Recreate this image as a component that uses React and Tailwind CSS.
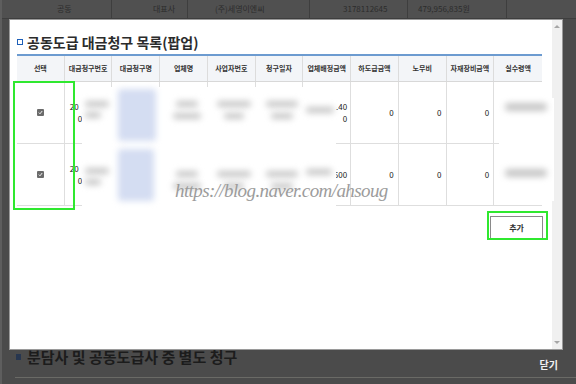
import React from "react";

const HEADERS = [
  "선택",
  "대금청구번호",
  "대금청구명",
  "업체명",
  "사업자번호",
  "청구일자",
  "업체배정금액",
  "하도급금액",
  "노무비",
  "자재장비금액",
  "실수령액",
];

const ROWS = [
  { no: ["20", "0"], amount: ["5.40", "0"] },
  { no: ["20", "0"], amount: ["600"] },
];

function CheckBox() {
  return (
    <span className="flex h-[7px] w-[7px] items-center justify-center rounded-[1px] bg-[#6b6b6b]">
      <svg width="5" height="5" viewBox="0 0 5 5">
        <path d="M0.8 2.6 L2 3.8 L4.2 1" fill="none" stroke="#fff" strokeWidth="0.9" />
      </svg>
    </span>
  );
}

function Blob({ w, h = 6, color = "#c6c6c6" }) {
  return <div className="rounded-full blur-[3px]" style={{ width: w, height: h, background: color }} />;
}

function BlurColumn({ lines, top = 14, gap = 6 }) {
  return (
    <div className="flex w-[47.7px] flex-col items-center gap-[52px]">
      {[0, 1].map((r) => (
        <div key={r} className="flex flex-col items-center" style={{ marginTop: r === 0 ? top : 0, gap }}>
          {lines.map((w, i) => (
            <Blob key={i} w={w} />
          ))}
        </div>
      ))}
    </div>
  );
}

export default function App() {
  return (
    <div className="relative h-[384px] w-[576px] overflow-hidden bg-[#4b4b4b] font-['Noto_Sans_CJK_KR','Noto_Sans',sans-serif] antialiased">
      {/* dimmed page behind */}
      <div className="flex h-full flex-col border-l-[2px] border-[#5e5e5e]">
        <div className="flex h-[19px] border-b border-[#3e3e3e] bg-[#505050] text-[8px] leading-[18px] text-[#2c2c2c]">
          <div className="w-[110px] border-r border-[#3e3e3e] pl-[55px]">공동</div>
          <div className="w-[76px] border-r border-[#3e3e3e] pl-[41px]">대표사</div>
          <div className="w-[122px] border-r border-[#3e3e3e] pl-[27px]">(주)세영이엔씨</div>
          <div className="w-[98px] border-r border-[#3e3e3e] pl-[33px]">3178112645</div>
          <div className="w-[99px] border-r border-[#3e3e3e] pl-[10px]">479,956,835원</div>
          <div className="flex-1" />
        </div>
        <div className="mt-[329px] flex items-center gap-[6px] pl-[14px]">
          <span className="h-[6px] w-[5px] bg-[#27364f]" />
          <span className="text-[15px] font-bold leading-[18px] text-[#1c1c1c]">분담사 및 공동도급사 중 별도 청구</span>
        </div>
        <div className="mt-[11px] ml-[13px] h-px bg-[#6a6a66]" />
      </div>

      {/* dialog */}
      <div className="absolute left-[9px] top-[19px] flex w-[554px] flex-col">
        <div className="relative flex h-[331px] border border-[#9a9a9a] bg-white">
          <div className="flex-1 pl-[7px] pt-[13px]">
            <div className="flex h-[18px] items-center gap-[4px]">
              <span className="h-[6px] w-[6px] border-[1.5px] border-[#1d5fb8]" />
              <span className="text-[14px] font-bold leading-[18px] text-[#2b2b2b]">공동도급 대금청구 목록(팝업)</span>
            </div>
            <div className="mt-[3px] w-[525px] border-t-[2px] border-[#6c9bd0]">
              <div className="grid h-[26px] grid-cols-11 border-b border-[#d8d8d8] bg-[#f3f5f8]">
                {HEADERS.map((h, i) => (
                  <div
                    key={h}
                    className={`flex items-center justify-center text-[7px] font-bold text-[#333] ${i < 10 ? "border-r border-[#dcdcdc]" : ""}`}
                  >
                    {h}
                  </div>
                ))}
              </div>
              {ROWS.map((r, ri) => (
                <div key={ri} className="grid h-[62px] grid-cols-11 border-b border-[#dedede] text-[8px] text-[#222]">
                  <div className="flex items-center justify-center border-r border-[#dedede]">
                    <CheckBox />
                  </div>
                  <div className="flex flex-col justify-center border-r border-[#dedede] pl-[5px] leading-[12px]">
                    <span>{r.no[0]}</span>
                    <span className="pl-[8px]">{r.no[1]}</span>
                  </div>
                  <div className="border-r border-[#dedede]" />
                  <div className="border-r border-[#dedede]" />
                  <div className="border-r border-[#dedede]" />
                  <div className="border-r border-[#dedede]" />
                  <div className="flex flex-col items-end justify-center border-r border-[#dedede] pr-[3px] leading-[12px]">
                    {r.amount.map((a, i) => (
                      <span key={i}>{a}</span>
                    ))}
                  </div>
                  {[0, 1, 2].map((k) => (
                    <div key={k} className="flex items-center justify-end border-r border-[#dedede] pr-[4px]">
                      0
                    </div>
                  ))}
                  <div />
                </div>
              ))}
            </div>
            <div className="flex w-[526px] justify-end pt-[10px]">
              <button className="h-[23px] w-[53px] border border-[#8a8a8a] bg-white text-[8px] font-bold text-[#333]">
                추가
              </button>
            </div>
          </div>
          {/* scrollbar */}
          <div className="flex w-[10px] flex-col items-center justify-between bg-[#f0f0f0] py-[5px]">
            <span className="h-0 w-0 border-x-[3px] border-b-[3px] border-x-transparent border-b-[#a6a6a6]" />
            <span className="h-0 w-0 border-x-[3px] border-t-[3px] border-x-transparent border-t-[#a6a6a6]" />
          </div>

          {/* redacted cells */}
          <div className="absolute left-[72px] top-[67px] flex h-[119px] w-[254px] bg-white pl-[3px]">
            <div className="flex w-[30px] flex-col gap-[50px] pt-[14px]">
              <div className="flex flex-col gap-[5px]"><Blob w={24} /><Blob w={16} /></div>
              <div className="flex flex-col gap-[5px]"><Blob w={24} /><Blob w={16} /></div>
            </div>
            <div className="flex w-[48px] flex-col gap-[8px] pl-[3px] pt-[2px]">
              <div className="h-[52px] w-[38px] rounded-[3px] bg-[#d4ddf2] blur-[3px]" />
              <div className="h-[52px] w-[36px] rounded-[3px] bg-[#d4ddf2] blur-[3px]" />
            </div>
            <BlurColumn lines={[22, 28]} />
            <BlurColumn lines={[34, 20]} />
            <BlurColumn lines={[32, 22]} />
            <div className="flex w-[30px] flex-col gap-[56px] pt-[20px]">
              <Blob w={28} />
              <Blob w={26} />
            </div>
          </div>
          <div className="absolute left-[489px] top-[78px] flex h-[103px] w-[55px] flex-col gap-[58px] bg-white pl-[6px] pt-[5px]">
            <Blob w={42} h={8} />
            <Blob w={42} h={8} />
          </div>

          {/* watermark */}
          <div className="absolute left-[165px] top-[157px] font-['Liberation_Serif',serif] text-[19px] italic tracking-[-0.6px] text-[#9c9c9c]">
            https://blog.naver.com/ahsoug
          </div>

          {/* highlights */}
          <div className="absolute left-[3px] top-[61px] h-[129px] w-[62px] border-[2px] border-[#2fe82f]" />
          <div className="absolute left-[477px] top-[191px] h-[29px] w-[61px] border-[2px] border-[#2fe82f]" />
        </div>
        <div className="flex justify-end pr-[5px] pt-[9px]">
          <span className="text-[10px] font-bold leading-[12px] text-[#f2f2f2]">닫기</span>
        </div>
      </div>
    </div>
  );
}
